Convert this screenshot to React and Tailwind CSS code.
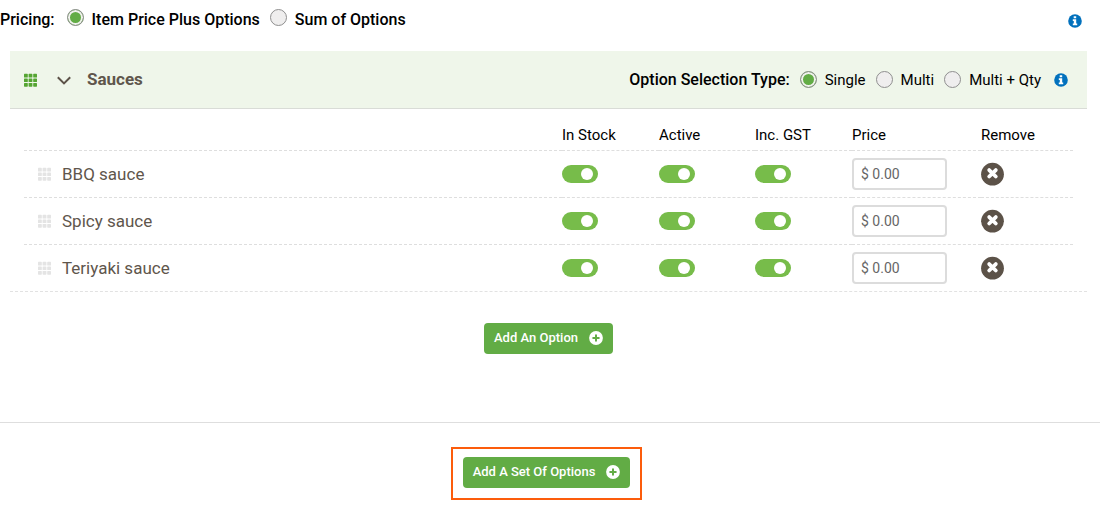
import React, { useState } from 'react';

const SAUCES = ['BBQ sauce', 'Spicy sauce', 'Teriyaki sauce'];
const FLAGS = ['In Stock', 'Active', 'Inc. GST'];

function GripIcon({ className }) {
  return (
    <svg viewBox="0 0 13 14" className={`h-[14px] w-[13px] shrink-0 ${className}`} fill="currentColor" aria-hidden="true">
      {[0.8, 5.4, 10].map((y) =>
        [0, 4.6, 9.2].map((x) => <rect key={`${x}-${y}`} x={x} y={y} width="3.8" height="3.7" rx="0.6" />)
      )}
    </svg>
  );
}

function InfoIcon() {
  return (
    <svg viewBox="0 0 14 14" className="block size-[14px]" aria-hidden="true">
      <circle cx="7" cy="7" r="6.8" fill="#0271bd" />
      <path fill="#fff" d="M5.7 2.3h2.5v2H5.7zM4.8 5.2h3.4v4.2h1v1.9H4.8V9.4h1V7.1h-1z" />
    </svg>
  );
}

function PlusIcon() {
  return (
    <svg viewBox="0 0 14 14" className="size-[14px] shrink-0" aria-hidden="true">
      <circle cx="7" cy="7" r="6.9" fill="#fff" />
      <path d="M7 4.2v5.6M4.2 7h5.6" stroke="#62ac45" strokeWidth="2" strokeLinecap="round" />
    </svg>
  );
}

function RemoveIcon() {
  return (
    <svg viewBox="0 0 24 24" className="block size-6" aria-hidden="true">
      <circle cx="11.5" cy="12.2" r="11.4" fill="#5c5248" />
      <path d="M8.2 8.1l6.6 6.4M14.8 8.1l-6.6 6.4" stroke="#fff" strokeWidth="3.8" strokeLinecap="round" />
    </svg>
  );
}

function Radio({ id, name, label, checked, onChange, className }) {
  return (
    <span className={`flex gap-2 ${className}`}>
      <input
        id={id}
        type="radio"
        name={name}
        checked={checked}
        onChange={onChange}
        className="size-[17px] shrink-0 appearance-none rounded-full border border-[#8f8f8f] bg-[#efeeee] checked:bg-[#62ac45] checked:shadow-[inset_0_0_0_2px_#f1f1ee]"
      />
      <label htmlFor={id}>{label}</label>
    </span>
  );
}

function Toggle({ label }) {
  return (
    <input
      type="checkbox"
      role="switch"
      aria-label={label}
      defaultChecked
      className="block h-[18px] w-9 appearance-none rounded-full bg-[#c8c8c8] px-[5px] py-[3px] before:block before:size-3 before:rounded-full before:bg-white checked:bg-[#77bc4a] checked:before:ml-[14px]"
    />
  );
}

function AddButton({ children }) {
  return (
    <button type="button" className="flex h-[31px] items-center gap-[11px] rounded bg-[#62ac45] px-[10px] pb-[2px] text-[13px] font-medium text-white">
      {children}
      <PlusIcon />
    </button>
  );
}

export default function App() {
  const [pricing, setPricing] = useState('plus');
  const [type, setType] = useState('Single');

  return (
    <main className="bg-white font-['Roboto',sans-serif] text-black">
      <div className="flex h-[51px] items-start pt-[9px] pr-[18px] text-base leading-[22px] font-medium">
        <span id="pricing" className="mr-3">Pricing:</span>
        <div role="radiogroup" aria-labelledby="pricing" className="flex gap-[10px]">
          <Radio id="plus" name="pricing" label="Item Price Plus Options" checked={pricing === 'plus'} onChange={() => setPricing('plus')} />
          <Radio id="sum" name="pricing" label="Sum of Options" checked={pricing === 'sum'} onChange={() => setPricing('sum')} />
        </div>
        <button type="button" aria-label="Pricing help" className="mt-[5px] ml-auto"><InfoIcon /></button>
      </div>

      <section className="mr-[13px] ml-[10px]">
        <header className="flex h-[58px] items-center border-b border-[#d9dcd7] bg-[#eff6ea] pr-[19px] pl-[14px]">
          <GripIcon className="mr-5 text-[#55a532]" />
          <button type="button" aria-label="Collapse Sauces" className="mr-4">
            <svg viewBox="0 0 14 10" className="block h-[10px] w-[14px]" fill="none" stroke="#5c5248" strokeWidth="2" aria-hidden="true">
              <path d="M0.8 2.2l6.2 6.2 6.2-6.2" />
            </svg>
          </button>
          <h2 className="text-[17px] font-bold text-[#5f564c]">Sauces</h2>
          <div role="radiogroup" aria-labelledby="type" className="ml-auto flex items-center gap-[10px] text-[15px] leading-5">
            <span id="type" className="text-base font-medium">Option Selection Type:</span>
            {['Single', 'Multi', 'Multi + Qty'].map((t) => (
              <Radio key={t} id={t} name="type" label={t} checked={type === t} onChange={() => setType(t)} className="items-center" />
            ))}
          </div>
          <button type="button" aria-label="Selection type help" className="ml-[13px]"><InfoIcon /></button>
        </header>

        <div className="border-b border-dashed border-[#e2e2e2] px-[14px]">
          <table className="w-full table-fixed border-collapse text-left">
            <colgroup>
              <col />
              <col className="w-[97px]" />
              <col className="w-24" />
              <col className="w-[97px]" />
              <col className="w-[129px]" />
              <col className="w-[92px]" />
            </colgroup>
            <thead>
              <tr className="h-[41px] border-b border-dashed border-[#dedede] text-[15px] leading-5">
                <td />
                {[...FLAGS, 'Price', 'Remove'].map((h) => (
                  <th key={h} scope="col" className="pt-3 font-normal">{h}</th>
                ))}
              </tr>
            </thead>
            <tbody>
              {SAUCES.map((name) => (
                <tr key={name} className="h-[47px] border-b border-dashed border-[#dedede] last:border-b-0">
                  <td>
                    <div className="flex items-center gap-[11px] pl-[14px] text-[17px] leading-6 text-[#5f564c]">
                      <GripIcon className="text-[#e4e4e4]" />
                      {name}
                    </div>
                  </td>
                  {FLAGS.map((f) => (
                    <td key={f}><Toggle label={`${name} ${f}`} /></td>
                  ))}
                  <td>
                    <input
                      type="text"
                      aria-label={`${name} price`}
                      defaultValue="$ 0.00"
                      className="block h-8 w-[95px] rounded border-2 border-[#dcdcdc] bg-white px-[7px] text-sm text-[#666]"
                    />
                  </td>
                  <td>
                    <button type="button" aria-label={`Remove ${name}`} className="block"><RemoveIcon /></button>
                  </td>
                </tr>
              ))}
            </tbody>
          </table>
        </div>

        <div className="flex justify-center pt-[31px] pb-[68px]">
          <AddButton>Add An Option</AddButton>
        </div>
      </section>

      <footer className="flex justify-center border-t border-[#dedede] py-6 pr-[7px]">
        <div className="border-2 border-[#fc5c0c] px-[10px] pt-2 pb-[10px]">
          <AddButton>Add A Set Of Options</AddButton>
        </div>
      </footer>
    </main>
  );
}
